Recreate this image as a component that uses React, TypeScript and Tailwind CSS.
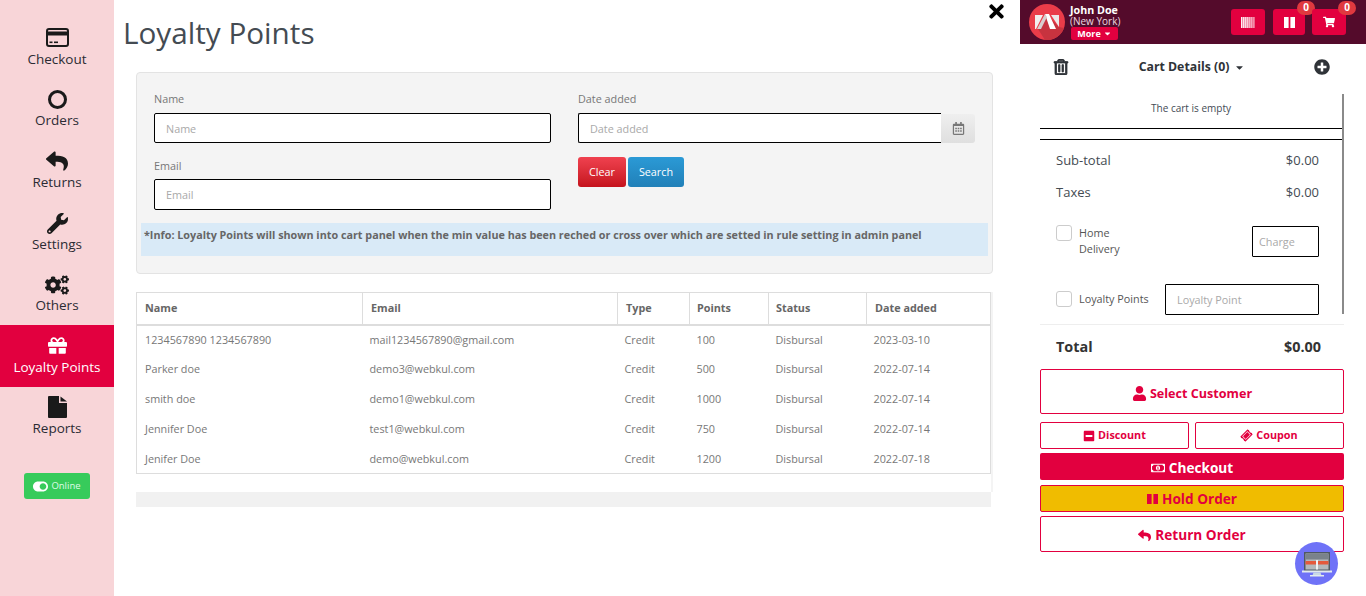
import React from "react";
import {
  FaReply, FaWrench, FaCogs, FaGift, FaToggleOn, FaRegTrashAlt,
  FaPlusCircle, FaUser, FaMinusSquare, FaTicketAlt, FaRegMoneyBillAlt, FaShoppingCart,
  FaRegCalendarAlt, FaTimes, FaCaretDown,
} from "react-icons/fa";

function CardIcon() {
  return (
    <svg viewBox="0 0 23 19" className="w-[23px] h-[19px]">
      <rect x="1" y="1" width="21" height="17" rx="2" fill="none" stroke="currentColor" strokeWidth="2" />
      <rect x="1" y="3.5" width="21" height="4" fill="currentColor" />
      <rect x="3.5" y="13.5" width="3" height="1.6" fill="currentColor" />
      <rect x="8" y="13.5" width="4" height="1.6" fill="currentColor" />
    </svg>
  );
}

function CircleIcon() {
  return (
    <svg viewBox="0 0 19 19" className="w-[19px] h-[19px]">
      <circle cx="9.5" cy="9.5" r="8" fill="none" stroke="currentColor" strokeWidth="3" />
    </svg>
  );
}

function FileIcon() {
  return (
    <svg viewBox="0 0 19 22" className="w-[19px] h-[22px]">
      <path d="M0 1a1 1 0 0 1 1-1h10v7h8v14a1 1 0 0 1-1 1H1a1 1 0 0 1-1-1z" fill="currentColor" />
      <path d="M12.5 0.5 19 5.5h-6.5z" fill="currentColor" />
    </svg>
  );
}

function PauseIcon({ w, h }: { w: string; h: string }) {
  return (
    <svg viewBox="0 0 11 11" preserveAspectRatio="none" className={`${w} ${h}`}>
      <rect x="0" y="0" width="4.6" height="11" fill="currentColor" />
      <rect x="6.4" y="0" width="4.6" height="11" fill="currentColor" />
    </svg>
  );
}

const nav = [
  { label: "Checkout", icon: <CardIcon /> },
  { label: "Orders", icon: <CircleIcon /> },
  { label: "Returns", icon: <FaReply size={22} /> },
  { label: "Settings", icon: <FaWrench size={21} className="translate-y-[1px]" /> },
  { label: "Others", icon: <FaCogs size={24} className="translate-y-[1px]" /> },
  { label: "Loyalty Points", icon: <FaGift size={19} /> },
  { label: "Reports", icon: <FileIcon /> },
];

const rows = [
  ["1234567890 1234567890", "mail1234567890@gmail.com", "Credit", "100", "Disbursal", "2023-03-10"],
  ["Parker doe", "demo3@webkul.com", "Credit", "500", "Disbursal", "2022-07-14"],
  ["smith doe", "demo1@webkul.com", "Credit", "1000", "Disbursal", "2022-07-14"],
  ["Jennifer Doe", "test1@webkul.com", "Credit", "750", "Disbursal", "2022-07-14"],
  ["Jenifer Doe", "demo@webkul.com", "Credit", "1200", "Disbursal", "2022-07-18"],
];

function Logo() {
  return (
    <svg viewBox="0 0 36 36" className="w-[36px] h-[36px] shrink-0">
      <circle cx="18" cy="18" r="18" fill="#ea3c49" />
      <path d="M9 25 L18 11 L30 23 L35 24 A18 18 0 0 1 16 36Z" fill="#c7333f" />
      <path d="M6 11 L14 11 L7 25 L6 25Z" fill="#f2eeee" />
      <path d="M16 10 L20 10 L27 25 L21 25 Z" fill="#ffffff" />
      <path d="M8 25 L16 10 L18 13 L12 25Z" fill="#d8cfcf" />
      <path d="M22 11 L30 11 L30 23Z" fill="#ece7e7" />
    </svg>
  );
}

function Barcode() {
  const bars = [0.95, 0.55, 0.9, 0.6, 0.85, 0.6, 0.8, 0.55, 0.7, 0.5, 0.65, 0.45, 0.55, 0.4];
  return (
    <svg viewBox="0 0 14 11" className="w-[14px] h-[11px]">
      {bars.map((o, i) => (
        <rect key={i} x={i} y="0" width="1" height="11" fill="#fff" opacity={o} />
      ))}
    </svg>
  );
}

function Monitor() {
  return (
    <svg viewBox="0 0 30 26" className="w-[30px] h-[26px]">
      <rect x="2" y="1" width="26" height="19" fill="#4f5862" />
      <rect x="3.5" y="2.5" width="23" height="16" fill="#b4b8bb" />
      <rect x="3.5" y="3" width="23" height="5.5" fill="#7a828b" />
      <rect x="3.5" y="10" width="10.5" height="3.5" fill="#e4593c" />
      <rect x="16" y="10" width="10.5" height="3.5" fill="#e4593c" />
      <rect x="14" y="9" width="2" height="9.5" fill="#eef2f4" />
      <rect x="0" y="19.5" width="30" height="2" fill="#e3ebee" />
      <path d="M11.5 21.5h7l1 3h-9z" fill="#c9d9e4" />
      <rect x="8" y="24" width="14" height="1.5" fill="#e3ebee" />
    </svg>
  );
}

function HeadBtn({ w, ml, children, badge }: { w: string; ml: string; children: React.ReactNode; badge?: boolean }) {
  return (
    <div className={`relative h-[26px] ${w} ${ml} bg-[#e2003f] rounded-[3px] flex items-center justify-center text-white`}>
      {children}
      {badge && (
        <span className="absolute -top-[8px] -right-[10px] w-[18px] h-[14px] rounded-full bg-[#e0393f] text-white text-[10px] font-bold leading-[12px] text-center">
          0
        </span>
      )}
    </div>
  );
}

const inputBase =
  "block bg-white border border-black text-[10.8px] outline-none placeholder:text-[#a9a9a9]";

export default function App() {
  return (
    <div className="flex w-[1366px] h-[596px] overflow-hidden bg-white font-['Open_Sans',sans-serif]">
      <aside className="w-[114px] shrink-0 bg-[#f8d5d8] pt-[17.2px]">
        {nav.map((n) => {
          const active = n.label === "Loyalty Points";
          return (
            <div
              key={n.label}
              className={`h-[61.6px] flex flex-col items-center justify-end pb-[11px] text-[13.5px] leading-[18px] ${
                active ? "bg-[#e2003f] text-white" : "text-[#2b2b33]"
              }`}
            >
              <span className={`h-[24px] flex items-center ${active ? "text-white" : "text-[#1a1a1a]"}`}>{n.icon}</span>
              <span>{n.label}</span>
            </div>
          );
        })}
        <div className="mt-[25px] mx-[24px] h-[26px] rounded-[3px] bg-[#37cb5b] text-[#dffbe6] flex items-center justify-center gap-[3px] text-[9.5px]">
          <FaToggleOn size={15} className="text-white" />
          Online
        </div>
      </aside>

      <main className="relative w-[906px] shrink-0">
        <FaTimes className="absolute top-[1px] right-[13px] text-black" size={21} />
        <h1 className="ml-[9px] pt-[13px] h-[72px] text-[29.7px] leading-[40px] text-[#444b52]">Loyalty Points</h1>
        <section className="ml-[22px] w-[857px] h-[202px] bg-[#f4f4f4] border border-[#e3e3e3] rounded-[4px] px-[4px] pt-[19px]">
          <div className="grid grid-cols-[397px_397px] gap-x-[27px] pl-[13px]">
            <div>
              <div className="text-[10.8px] leading-[14px] text-[#777] mb-[7px]">Name</div>
              <input readOnly placeholder="Name" className={`${inputBase} w-full h-[30px] rounded-[2px] px-[11px]`} />
              <div className="mt-[16px]">
                <div className="text-[10.8px] leading-[14px] text-[#777] mb-[6px]">Email</div>
                <input readOnly placeholder="Email" className={`${inputBase} w-full h-[31px] rounded-[2px] px-[11px]`} />
              </div>
            </div>
            <div>
              <div className="text-[10.8px] leading-[14px] text-[#777] mb-[7px]">Date added</div>
              <div className="flex">
                <input
                  readOnly
                  placeholder="Date added"
                  className={`${inputBase} w-[363px] h-[30px] border-r-0 rounded-l-[2px] px-[11px]`}
                />
                <div className="w-[34px] h-[29px] mt-[1px] rounded-r-[3px] bg-gradient-to-b from-[#efefef] to-[#dfdfdf] flex items-center justify-center text-[#777]">
                  <FaRegCalendarAlt size={13} />
                </div>
              </div>
              <div className="flex gap-[2px] mt-[14px]">
                <button className="w-[48px] h-[30px] rounded-[3px] bg-gradient-to-b from-[#f0414f] to-[#c5111c] text-white text-[10.8px]">Clear</button>
                <button className="w-[56px] h-[30px] rounded-[3px] bg-gradient-to-b from-[#2b9ad6] to-[#2180b8] text-white text-[10.8px]">Search</button>
              </div>
            </div>
          </div>
          <div className="mt-[13px] h-[33px] bg-[#d9eaf7] px-[3px] pt-[4px] text-[10.79px] leading-[15px] font-bold text-[#666]">
            *Info: Loyalty Points will shown into cart panel when the min value has been reched or cross over which are setted in rule setting in admin panel
          </div>
        </section>

        <div className="ml-[22px] mt-[18px] w-[857px] h-[200px] border-r-2 border-[#f4f4f4]">
          <table className="w-[855px] table-fixed border-collapse border border-[#dddddd] text-[10.8px] text-left">
            <colgroup>
              <col className="w-[226px]" />
              <col className="w-[255px]" />
              <col className="w-[72px]" />
              <col className="w-[79px]" />
              <col className="w-[98px]" />
              <col className="w-[124px]" />
            </colgroup>
            <thead>
              <tr className="h-[32px] border-b-2 border-[#dddddd]">
                {["Name", "Email", "Type", "Points", "Status", "Date added"].map((h, i) => (
                  <th key={h} className={`border-r border-[#dddddd] ${i === 3 || i === 4 ? "pl-[7px]" : "pl-[8px]"} pr-0 font-bold text-[#666]`}>
                    {h}
                  </th>
                ))}
              </tr>
            </thead>
            <tbody className="text-[#777]">
              {rows.map((r, i) => (
                <tr key={i} className={i === 4 ? "h-[29px]" : "h-[30px]"}>
                  {r.map((c, j) => (
                    <td key={j} className={`${j === 0 ? "pl-[8px]" : "pl-[7px]"} pr-0`}>
                      {c}
                    </td>
                  ))}
                </tr>
              ))}
            </tbody>
          </table>
          <div className="mt-[18px] h-[15px] w-[855px] bg-[#f1f1f1]" />
        </div>
      </main>

      <aside className="relative w-[346px] shrink-0">
        <header className="h-[44px] bg-[#540b2b] flex items-center pl-[9px] pr-[20px]">
          <Logo />
          <div className="ml-[5px] w-[60px] text-white text-[10px] leading-[11px]">
            <div className="mt-[1px] font-bold text-[10.7px]">John Doe</div>
            <div className="text-[#ecd9e0]">(New York)</div>
            <div className="ml-[1px] w-[47px] h-[13px] bg-[#e2003f] rounded-[2px] text-[9px] font-bold flex items-center justify-center gap-[2px]">
              More <FaCaretDown size={9} />
            </div>
          </div>
          <div className="flex-1" />
          <HeadBtn w="w-[34px]" ml="ml-0"><Barcode /></HeadBtn>
          <HeadBtn w="w-[32px]" ml="ml-[8px]" badge><PauseIcon w="w-[11px]" h="h-[11px]" /></HeadBtn>
          <HeadBtn w="w-[34px]" ml="ml-[7px]" badge><FaShoppingCart size={12} /></HeadBtn>
        </header>

        <div className="ml-[20px] w-[304px]">
          <div className="h-[44px] pt-[2px] flex items-center justify-between pl-[13px] pr-[14px] text-[#2f3338]">
            <FaRegTrashAlt size={16} strokeWidth={25} stroke="currentColor" />
            <div className="text-[12.3px] font-bold flex items-center gap-[5px] ml-[1px]">
              Cart Details (0) <FaCaretDown size={11} />
            </div>
            <FaPlusCircle size={16} />
          </div>

          <div className="h-[220px] border-r-2 border-[#8a8a8a] mt-[6px]">
            <div className="text-center text-[10px] leading-[14px] text-[#444b55] pt-[7px] h-[34px]">The cart is empty</div>
            <div className="border-t border-black h-[11px]" />
            <div className="border-t border-black h-[6px]" />
            <div className="pl-[16px] pr-[23px] text-[#444b52] text-[13px]">
              <div className="flex justify-between h-[32px] items-center"><span>Sub-total</span><span>$0.00</span></div>
              <div className="flex justify-between h-[32px] items-center"><span>Taxes</span><span>$0.00</span></div>
            </div>
            <div className="flex pl-[16px] pr-[23px] mt-[15px] text-[10.8px] leading-[16px] text-[#555]">
              <span className="mt-[1px] w-[16px] h-[16px] bg-white border border-[#ccc] rounded-[3px]" />
              <span className="ml-[7px] mt-[1px] w-[50px]">Home<br />Delivery</span>
              <div className="flex-1" />
              <input
                readOnly
                placeholder="Charge"
                className="w-[67px] h-[31px] mt-[2px] border border-black rounded-[1px] px-[6px] text-[10.8px] outline-none placeholder:text-[#a9a9a9]"
              />
            </div>
            <div className="flex items-center pl-[16px] pr-[23px] mt-[27px] text-[10.8px] text-[#555]">
              <span className="w-[16px] h-[16px] -translate-y-[1px] bg-white border border-[#ccc] rounded-[3px]" />
              <span className="ml-[7px]">Loyalty Points</span>
              <div className="flex-1" />
              <input
                readOnly
                placeholder="Loyalty Point"
                className="w-[154px] h-[31px] border border-black rounded-[1px] px-[11px] text-[10.8px] outline-none placeholder:text-[#a9a9a9]"
              />
            </div>
          </div>

          <div className="mt-[10px] border-t border-[#eeeeee] h-[45px] flex items-center justify-between pl-[16px] pr-[23px] text-[14.4px] font-bold text-[#333]">
            <span>Total</span>
            <span>$0.00</span>
          </div>

          <button className="w-full h-[45px] pt-[5px] border border-[#e2003f] rounded-[2px] text-[#e2003f] text-[12.6px] font-bold flex items-center justify-center gap-[3px]">
            <FaUser size={15} className="-translate-y-[1px]" /> Select Customer
          </button>
          <div className="flex justify-between mt-[8px]">
            <button className="w-[149px] h-[27px] border border-[#e2003f] rounded-[2px] text-[#e2003f] text-[10.8px] font-bold flex items-center justify-center gap-[3px]">
              <FaMinusSquare size={12} /> Discount
            </button>
            <button className="w-[149px] h-[27px] border border-[#e2003f] rounded-[2px] text-[#e2003f] text-[10.8px] font-bold flex items-center justify-center gap-[4px]">
              <FaTicketAlt size={11} className="-rotate-45" /> Coupon
            </button>
          </div>
          <button className="mt-[4px] w-full h-[27px] pt-[3px] bg-[#e2003f] rounded-[2px] text-white text-[13.6px] font-bold flex items-center justify-center gap-[4px]">
            <FaRegMoneyBillAlt size={14} /> Checkout
          </button>
          <button className="mt-[5px] w-full h-[27px] pt-[1px] bg-[#f0bc00] border border-[#e2003f] rounded-[2px] text-[#e2003f] text-[13.6px] font-bold flex items-center justify-center gap-[4px]">
            <PauseIcon w="w-[11px]" h="h-[10px]" /> Hold Order
          </button>
          <button className="mt-[4px] w-full h-[36px] pt-[3px] border border-[#e2003f] rounded-[2px] text-[#e2003f] text-[13.6px] font-bold flex items-center justify-center gap-[4px]">
            <FaReply size={13} /> Return Order
          </button>
        </div>

        <div className="absolute left-[275px] top-[542px] w-[43px] h-[43px] rounded-full bg-[#6f72f7] flex items-center justify-center">
          <Monitor />
        </div>
      </aside>
    </div>
  );
}
